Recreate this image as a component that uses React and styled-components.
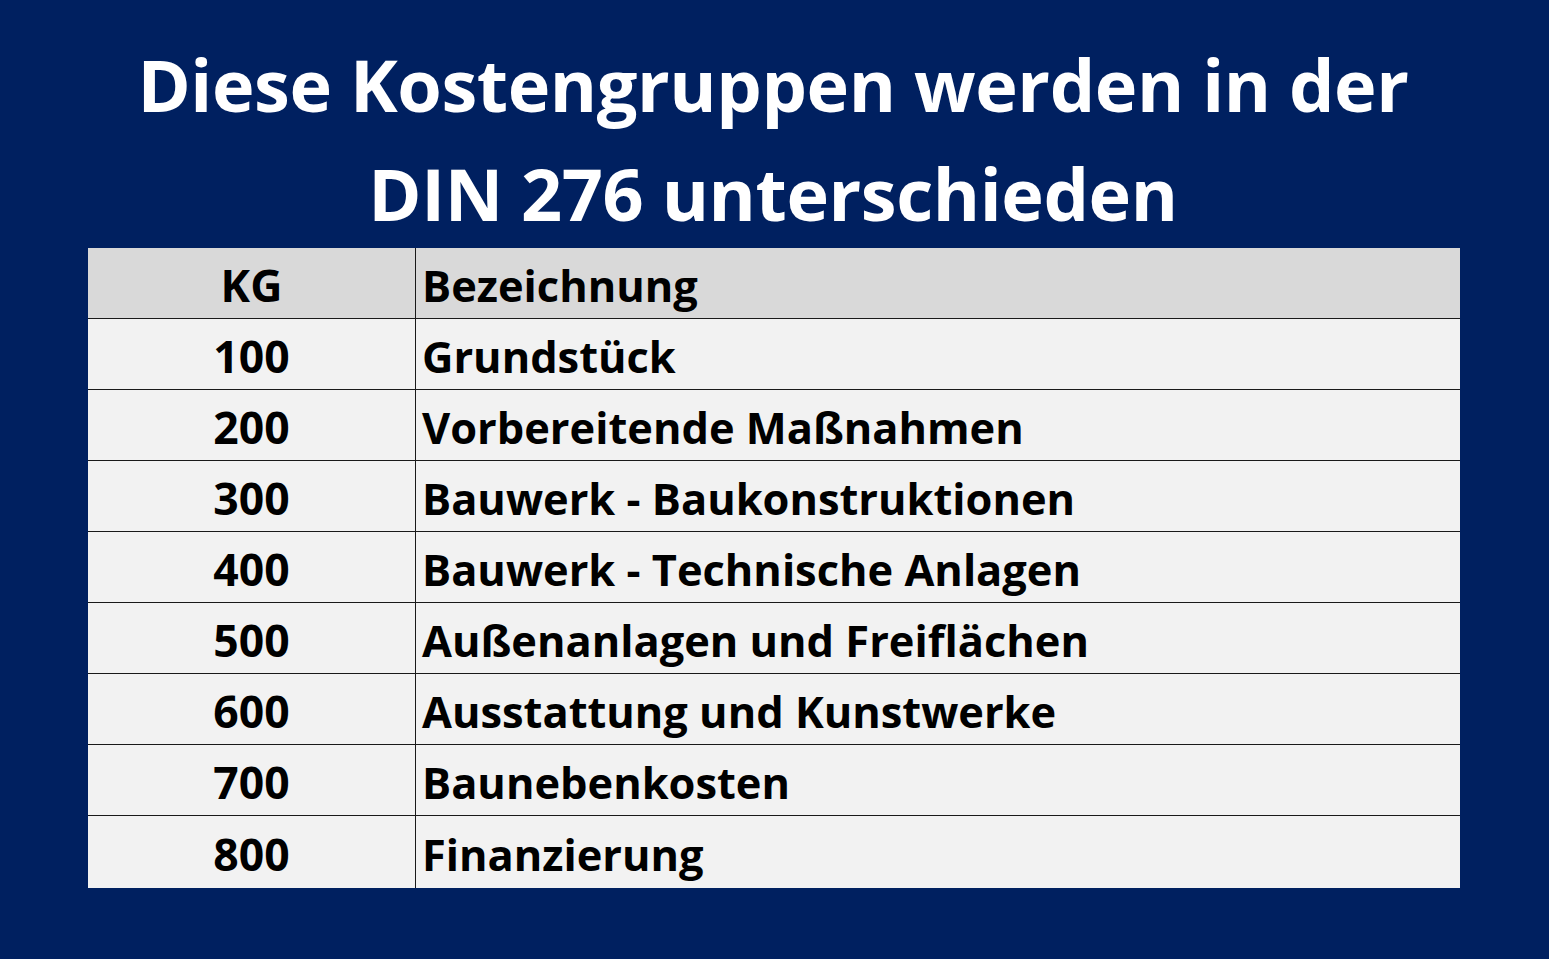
import React from 'react';
import styled, { createGlobalStyle } from 'styled-components';

const GlobalStyle = createGlobalStyle`
    html, body {
        margin: 0;
        padding: 0;
        background: #002060;
    }
    body {
        font-family: "Open Sans", "Liberation Sans", sans-serif;
    }
`;

const rows = [
    { kg: '100', name: 'Grundstück' },
    { kg: '200', name: 'Vorbereitende Maßnahmen' },
    { kg: '300', name: 'Bauwerk - Baukonstruktionen' },
    { kg: '400', name: 'Bauwerk - Technische Anlagen' },
    { kg: '500', name: 'Außenanlagen und Freiflächen' },
    { kg: '600', name: 'Ausstattung und Kunstwerke' },
    { kg: '700', name: 'Baunebenkosten' },
    { kg: '800', name: 'Finanzierung' },
];

const App = () => {
    return (
        <>
            <GlobalStyle />
            <Page>
                <Title>
                    Diese Kostengruppen werden in der
                    <br />
                    DIN 276 unterschieden
                </Title>
                <Table>
                    <Row header>
                        <KgCell>KG</KgCell>
                        <NameCell>Bezeichnung</NameCell>
                    </Row>
                    {rows.map((r) => (
                        <Row key={r.kg}>
                            <KgCell>{r.kg}</KgCell>
                            <NameCell>{r.name}</NameCell>
                        </Row>
                    ))}
                </Table>
            </Page>
        </>
    );
};

const Page = styled.div`
    width: 1549px;
    height: 959px;
    background: #002060;
    padding-top: 30px;
    box-sizing: border-box;
    display: flex;
    flex-direction: column;
    align-items: center;
`;

const Title = styled.h1`
    margin: 0 0 0 -3px;
    color: #ffffff;
    font-family: "Open Sans", "Liberation Sans", sans-serif;
    font-weight: 700;
    font-size: 72px;
    line-height: 109px;
    letter-spacing: -0.4px;
    text-align: center;
`;

const Table = styled.div`
    align-self: flex-start;
    margin-left: 88px;
    width: 1372px;
    display: flex;
    flex-direction: column;
`;

const Row = styled.div`
    display: grid;
    grid-template-columns: 328px 1fr;
    height: 71px;
    box-sizing: border-box;
    background: ${(props) => (props.header ? '#d9d9d9' : '#f2f2f2')};
    border-bottom: 1px solid #1a1a1a;

    &:last-child {
        height: 72px;
        border-bottom: none;
    }
`;

const Cell = styled.div`
    display: flex;
    align-items: center;
    padding-top: 5px;
    box-sizing: border-box;
    color: #000000;
    font-family: "Open Sans", "Liberation Sans", sans-serif;
    font-weight: 700;
    font-size: 43.4px;
    letter-spacing: 0;
    line-height: 1;
`;

const KgCell = styled(Cell)`
    justify-content: center;
    border-right: 1px solid #1a1a1a;
    font-size: 44.5px;
`;

const NameCell = styled(Cell)`
    padding-left: 6px;
`;

export default App;
